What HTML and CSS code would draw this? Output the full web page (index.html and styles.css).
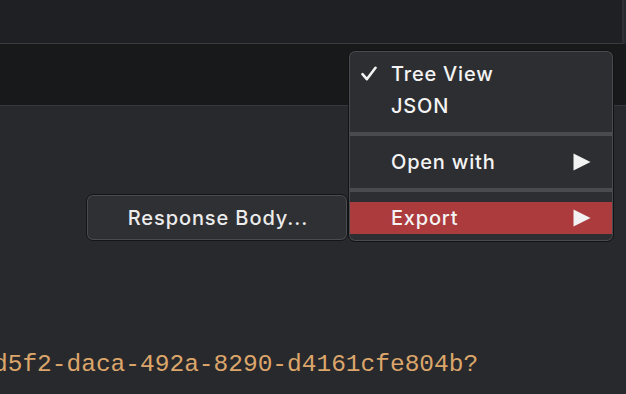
FILE: index.html
```html
<!DOCTYPE html>
<html>
<head>
<meta charset="utf-8">
<link rel="stylesheet" href="styles.css">
</head>
<body>
<div class="app">
  <div class="titlebar"></div>
  <div class="toolbar"></div>
  <div class="content">
    <div class="code">d5f2-daca-492a-8290-d4161cfe804b?</div>
  </div>
</div>

<div class="button-popup">Response Body...</div>

<div class="menu">
  <div class="item">
    <svg class="check" width="16" height="16" viewBox="0 0 16 16"><path d="M1.5 8.2 L5.8 13.2 L14.5 1.8" fill="none" stroke="#f2f2f2" stroke-width="2.6" stroke-linecap="round" stroke-linejoin="round"/></svg>
    <span class="label">Tree View</span>
  </div>
  <div class="item"><span class="label">JSON</span></div>
  <div class="sep"></div>
  <div class="item">
    <span class="label">Open with</span>
    <svg class="arrow" width="18" height="18" viewBox="0 0 18 18"><path d="M0.5 0.5 L17.5 9 L0.5 17.5 Z" fill="#f2f2f2"/></svg>
  </div>
  <div class="sep"></div>
  <div class="item active">
    <span class="label">Export</span>
    <svg class="arrow" width="18" height="18" viewBox="0 0 18 18"><path d="M0.5 0.5 L17.5 9 L0.5 17.5 Z" fill="#f2f2f2"/></svg>
  </div>
</div>
</body>
</html>
```
FILE: styles.css
```css
html, body {
  margin: 0;
  padding: 0;
  width: 626px;
  height: 394px;
  overflow: hidden;
  background: #28292d;
  font-family: Inter, "Noto Sans", sans-serif;
}

.app {
  display: flex;
  flex-direction: column;
  height: 394px;
}

.titlebar {
  height: 43px;
  background: #1f2023;
  border-bottom: 1px solid #3a3b3e;
  box-sizing: content-box;
  border-right: 2px solid #2f3033;
  width: 622px;
}

.toolbar {
  height: 61px;
  background: #18191b;
  border-bottom: 1px solid #36373a;
}

.content {
  flex: 1;
  background: #28292d;
  padding-top: 245px;
}

.code {
  font-family: "Liberation Mono", "Courier New", monospace;
  font-size: 24.5px;
  line-height: 28px;
  color: #dca66b;
  margin-left: -7px;
  white-space: nowrap;
}

.button-popup {
  position: absolute;
  left: 86px;
  top: 194px;
  width: 262px;
  height: 47px;
  box-sizing: border-box;
  border: 1px solid #141517;
  border-radius: 7px;
  background: #2f3033;
  box-shadow: inset 0 0 0 1px #4a4b4e;
  color: #ececec;
  font-size: 20px;
  font-weight: 500;
  letter-spacing: 0.9px;
  display: flex;
  align-items: center;
  justify-content: center;
  padding-left: 2px;
}

.menu {
  position: absolute;
  left: 348px;
  top: 50px;
  width: 266px;
  box-sizing: border-box;
  border: 1px solid #111214;
  border-radius: 7px;
  background: #2d2e31;
  box-shadow: inset 0 0 0 1px #4a4b4e;
  padding: 7px 1px;
  overflow: hidden;
}

.item {
  height: 32px;
  display: flex;
  align-items: center;
  position: relative;
  padding-left: 41px;
  color: #f4f4f4;
  font-size: 20px;
  font-weight: 500;
  letter-spacing: 0.8px;
}

.item.active {
  background: #ab3b3c;
}

.check {
  position: absolute;
  left: 11px;
  top: 8px;
}

.arrow {
  position: absolute;
  left: 223px;
  top: 7px;
}

.sep {
  height: 4px;
  margin: 10px -1px;
  background: #4a4b4f;
}
```
